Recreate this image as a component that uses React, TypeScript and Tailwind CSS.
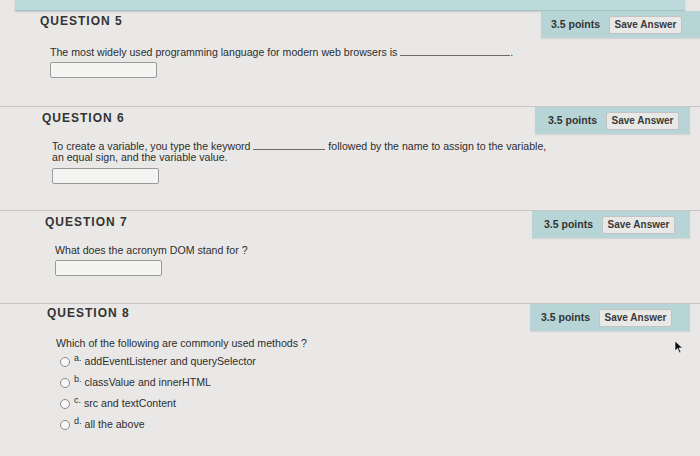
import type { ReactNode } from 'react'

type Pregunta = {
  numero: number
  alto: string
  sangria: string
  cuerpo: string
  panel: string
  titulo: string
  borde: boolean
  contenido: ReactNode
}

const Campo = () => (
  <div className="mt-[3px] w-[107px] h-[16px] rounded-[2px] border border-[#9a9a9a] bg-[#f4f4f3]" />
)

const Blanco = ({ w }: { w: string }) => (
  <span className={`inline-block ${w} border-b border-[#6a6a6a] h-[10px] align-baseline`} />
)

const opciones = [
  { letra: 'a.', texto: 'addEventListener and querySelector' },
  { letra: 'b.', texto: 'classValue and innerHTML' },
  { letra: 'c.', texto: 'src and textContent' },
  { letra: 'd.', texto: 'all the above' },
]

const preguntas: Pregunta[] = [
  {
    numero: 5,
    alto: 'h-[95px]',
    sangria: 'pl-[40px]',
    cuerpo: 'pl-[10px] mt-[8px]',
    panel: 'w-[159px] mr-0 pl-[10px]',
    titulo: 'pt-[3px]',
    borde: false,
    contenido: (
      <>
        <p>
          The most widely used programming language for modern web browsers is{' '}
          <Blanco w="w-[110px]" />.
        </p>
        <Campo />
      </>
    ),
  },
  {
    numero: 6,
    alto: 'h-[104px]',
    sangria: 'pl-[42px]',
    cuerpo: 'pl-[10px] mt-[6px]',
    panel: 'w-[155px] mr-[10px] pl-[13px]',
    titulo: 'pt-[4px]',
    borde: true,
    contenido: (
      <>
        <p className="leading-[11px]">
          To create a variable, you type the keyword <Blanco w="w-[72px]" /> followed by the name to assign to the variable,
          <br />
          an equal sign, and the variable value.
        </p>
        <div className="mt-[5px]">
          <Campo />
        </div>
      </>
    ),
  },
  {
    numero: 7,
    alto: 'h-[93px]',
    sangria: 'pl-[45px]',
    cuerpo: 'pl-[10px] mt-[6px]',
    panel: 'w-[158px] mr-[10px] pl-[12px]',
    titulo: 'pt-[4px]',
    borde: true,
    contenido: (
      <>
        <p>What does the acronym DOM stand for ?</p>
        <Campo />
      </>
    ),
  },
  {
    numero: 8,
    alto: 'flex-1',
    sangria: 'pl-[47px]',
    cuerpo: 'pl-[9px] mt-[6px]',
    panel: 'w-[160px] mr-[10px] pl-[11px]',
    titulo: 'pt-[2px]',
    borde: true,
    contenido: (
      <>
        <p>Which of the following are commonly used methods ?</p>
        <div className="mt-[5px] pl-[4px] flex flex-col gap-[8px]">
          {opciones.map(o => (
            <label key={o.letra} className="flex items-center h-[13px]">
              <span className="w-[10px] h-[10px] rounded-full border border-[#8a8a8a] bg-[#f8f8f8]" />
              <span className="ml-[4px] text-[9px] relative -top-[3px]">{o.letra}</span>
              <span className="ml-[3px]">{o.texto}</span>
            </label>
          ))}
        </div>
      </>
    ),
  },
]

export default function App() {
  return (
    <div
      className="w-[700px] h-[456px] overflow-hidden bg-[#e9e8e6] text-[#2e2e2e] flex flex-col relative"
      style={{ fontFamily: '"Liberation Sans", Arial, sans-serif' }}
    >
      {/* barra del bloque anterior */}
      <div className="mx-[15px] h-[11px] bg-[#bcdadb] border-b border-[#a2c0c1] shadow-[0_1px_2px_rgba(0,0,0,0.15)]" />

      {preguntas.map(p => (
        <section
          key={p.numero}
          className={`${p.alto} ${p.sangria} shrink-0 ${p.borde ? 'border-t border-[#c5c5c3]' : ''}`}
        >
          <div className="flex justify-between items-start">
            <h3 className={`${p.titulo} text-[12px] leading-[14px] font-bold tracking-[1px] text-[#333]`}>
              QUESTION {p.numero}
            </h3>
            <div className={`${p.panel} h-[27px] bg-[#b7d5d6] flex items-center gap-[9px] shadow-[0_1px_1px_rgba(0,0,0,0.08)]`}>
              <span className="text-[10.5px] font-bold text-[#333]">3.5 points</span>
              <button className="w-[73px] h-[18px] bg-[#e8e8e7] border border-[#c3c3c3] rounded-[2px] text-[10px] font-bold text-[#3a3a3a]">
                Save Answer
              </button>
            </div>
          </div>
          <div className={`${p.cuerpo} text-[10.6px] leading-[13px]`}>{p.contenido}</div>
        </section>
      ))}

      {/* puntero del mouse */}
      <svg className="absolute left-[674px] top-[340px]" width="10" height="14" viewBox="0 0 10 14">
        <path d="M1 1 L1 11 L3.5 8.5 L5.5 13 L7 12.3 L5 8 L8.5 8 Z" fill="#111" stroke="#fff" strokeWidth="0.6" />
      </svg>
    </div>
  )
}
